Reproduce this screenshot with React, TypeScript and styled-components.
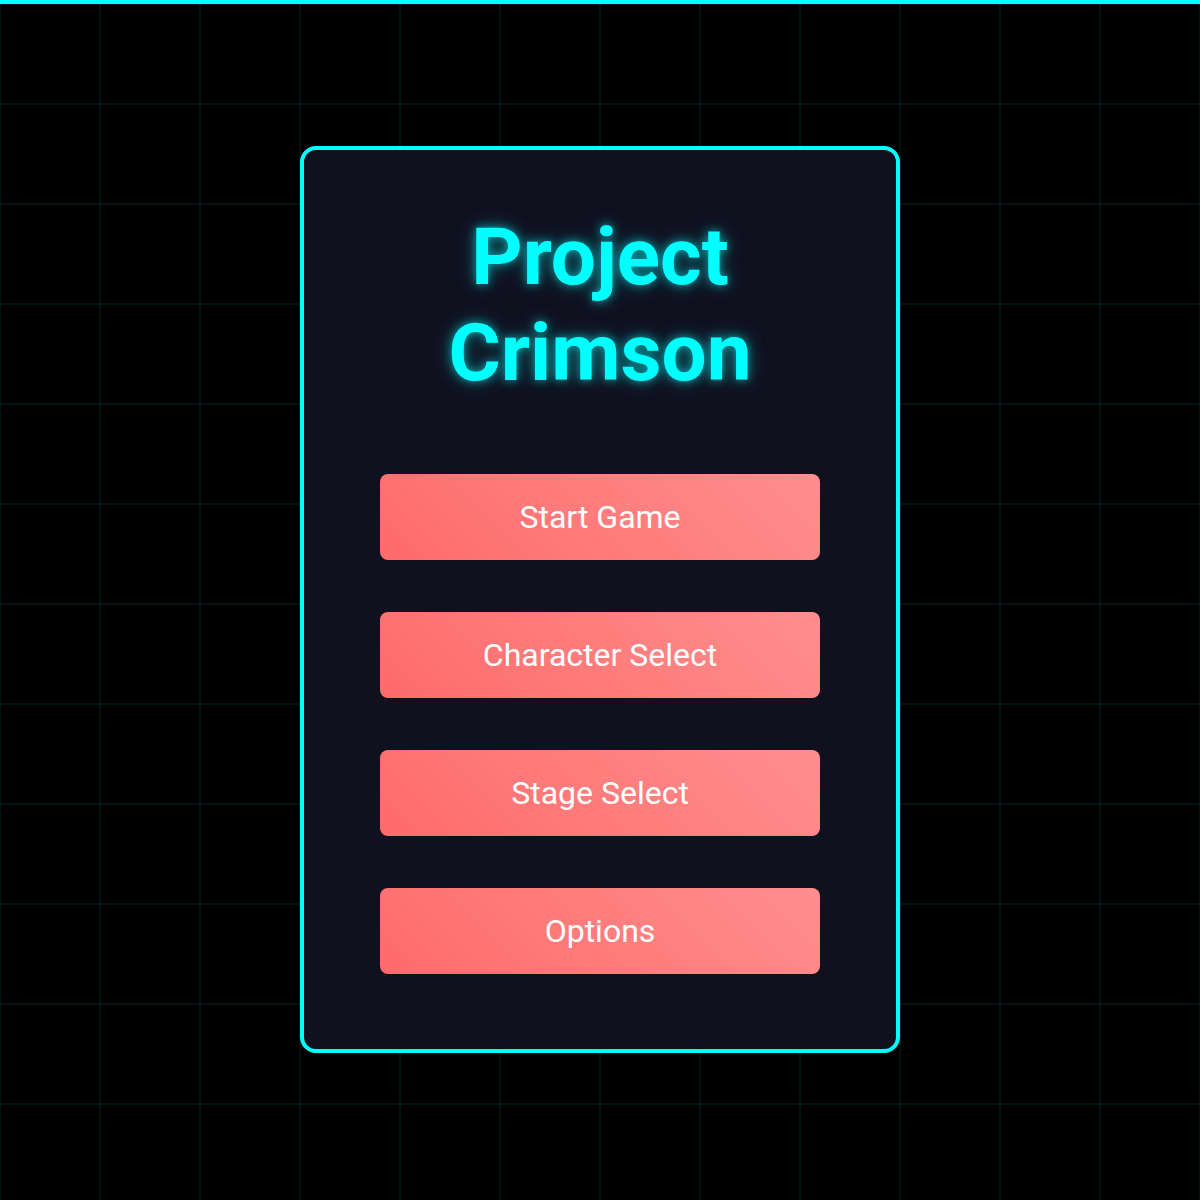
import React from 'react';
import styled, {createGlobalStyle} from "styled-components";

const GlobalStyle = createGlobalStyle`
    * {
        box-sizing: border-box;
        margin: 0;
        padding: 0;
    }
    body {
        background: #000;
        font-family: Roboto, "Liberation Sans", sans-serif;
    }
`

const menuItems = ['Start Game', 'Character Select', 'Stage Select', 'Options'];

export default function App() {
    return (
        <>
            <GlobalStyle/>
            <StyledPage>
                <MenuCard>
                    <MenuTitle>Project<br/>Crimson</MenuTitle>
                    <MenuList>
                        {menuItems.map(item => (
                            <MenuButton key={item}>{item}</MenuButton>
                        ))}
                    </MenuList>
                </MenuCard>
            </StyledPage>
        </>
    );
}

const StyledPage = styled.main`
    min-height: 100vh;
    display: flex;
    align-items: center;
    justify-content: center;
    padding-bottom: 5px;
    border-top: 4px solid #00ffff;
    background-color: #000;
    background-image:
        linear-gradient(rgba(0, 255, 255, 0.07) 2px, transparent 2px),
        linear-gradient(90deg, rgba(0, 255, 255, 0.07) 2px, transparent 2px);
    background-size: 100px 100px;
    background-position: -1px -1px;
`

const MenuCard = styled.section`
    width: 600px;
    display: flex;
    flex-direction: column;
    align-items: center;
    padding: 59px 0 75px;
    background: #10101f;
    border: 4px solid #00ffff;
    border-radius: 16px;
`

const MenuTitle = styled.h1`
    font-size: 80px;
    font-weight: 700;
    line-height: 96px;
    text-align: center;
    color: #00ffff;
    text-shadow: 0 0 10px rgba(0, 255, 255, 0.6), 0 0 20px rgba(0, 255, 255, 0.3);
    margin-bottom: 73px;
`

const MenuList = styled.nav`
    display: flex;
    flex-direction: column;
    gap: 52px;
`

const MenuButton = styled.button`
    width: 440px;
    height: 86px;
    border: none;
    border-radius: 8px;
    background: linear-gradient(45deg, #ff6b6b, #ff8e8e);
    color: #fff;
    font-family: Roboto, "Liberation Sans", sans-serif;
    font-size: 32px;
    font-weight: 400;
    cursor: pointer;
`
